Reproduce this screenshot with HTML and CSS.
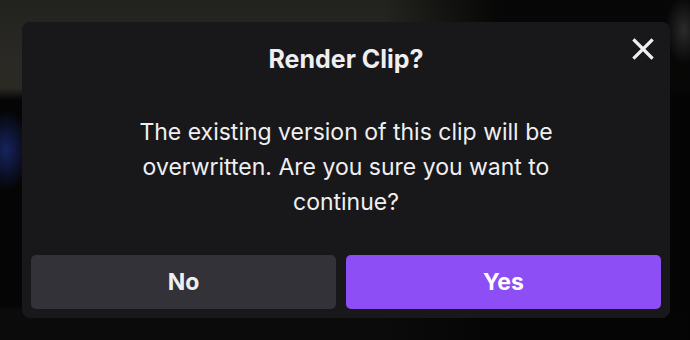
FILE: index.html
```html
<!DOCTYPE html>
<html lang="en">
<head>
<meta charset="utf-8">
<title>Render Clip?</title>
<link rel="stylesheet" href="styles.css">
</head>
<body>
<div class="backdrop">
  <div class="dialog" role="dialog" aria-labelledby="dlg-title">
    <button class="close" aria-label="Close">
      <svg width="22" height="22" viewBox="0 0 22 22" aria-hidden="true">
        <path d="M2.5 2.5 L19.5 19.5 M19.5 2.5 L2.5 19.5" stroke="#efeff1" stroke-width="3.2" stroke-linecap="square" fill="none"/>
      </svg>
    </button>
    <h2 class="title" id="dlg-title">Render Clip?</h2>
    <p class="message">The existing version of this clip will be overwritten. Are you sure you want to continue?</p>
    <div class="actions">
      <button class="btn btn-secondary">No</button>
      <button class="btn btn-primary">Yes</button>
    </div>
  </div>
</div>
</body>
</html>
```

FILE: styles.css
```css
html, body {
  margin: 0;
  padding: 0;
}

body {
  width: 690px;
  height: 340px;
  overflow: hidden;
  font-family: Inter, "Noto Sans", "Liberation Sans", sans-serif;
  background-color: #0b0b0b;
  background-image:
    radial-gradient(ellipse 22px 40px at 684px 30px, rgba(110,110,110,0.35), rgba(0,0,0,0) 85%),
    linear-gradient(90deg, rgba(0,0,0,0) 380px, rgba(4,4,4,0.92) 500px),
    radial-gradient(ellipse 28px 45px at 6px 150px, rgba(25,40,110,0.85), rgba(0,0,0,0) 90%),
    linear-gradient(180deg, #22221e 0px, #2a2925 60px, #2a2924 88px, #050505 100px, #050505 305px, #0b0b0b 310px);
}

.backdrop {
  padding: 22px 20px 22px 22px;
  box-sizing: border-box;
  height: 340px;
}

.dialog {
  position: relative;
  width: 648px;
  height: 296px;
  box-sizing: border-box;
  background: #18181b;
  border-radius: 8px;
  padding: 0 9px 9px;
  display: flex;
  flex-direction: column;
  align-items: stretch;
  color: #efeff1;
}

.close {
  position: absolute;
  top: 16px;
  right: 16px;
  width: 22px;
  height: 22px;
  padding: 0;
  border: 0;
  background: transparent;
  display: flex;
  align-items: center;
  justify-content: center;
}

.title {
  margin: 22px 0 0;
  font-size: 25px;
  line-height: 30px;
  font-weight: 700;
  text-align: center;
  color: #efeff1;
}

.message {
  margin: 41px auto 0;
  width: 450px;
  font-size: 23px;
  line-height: 35px;
  font-weight: 400;
  text-align: center;
  color: #efeff1;
}

.actions {
  margin-top: auto;
  display: grid;
  grid-template-columns: 305fr 315fr;
  gap: 10px;
}

.btn {
  height: 54px;
  border: 0;
  border-radius: 5px;
  font-family: inherit;
  font-size: 23px;
  font-weight: 700;
  color: #ffffff;
}

.btn-secondary {
  background: #323238;
  color: #efeff1;
}

.btn-primary {
  background: #8d4ef6;
}
```
